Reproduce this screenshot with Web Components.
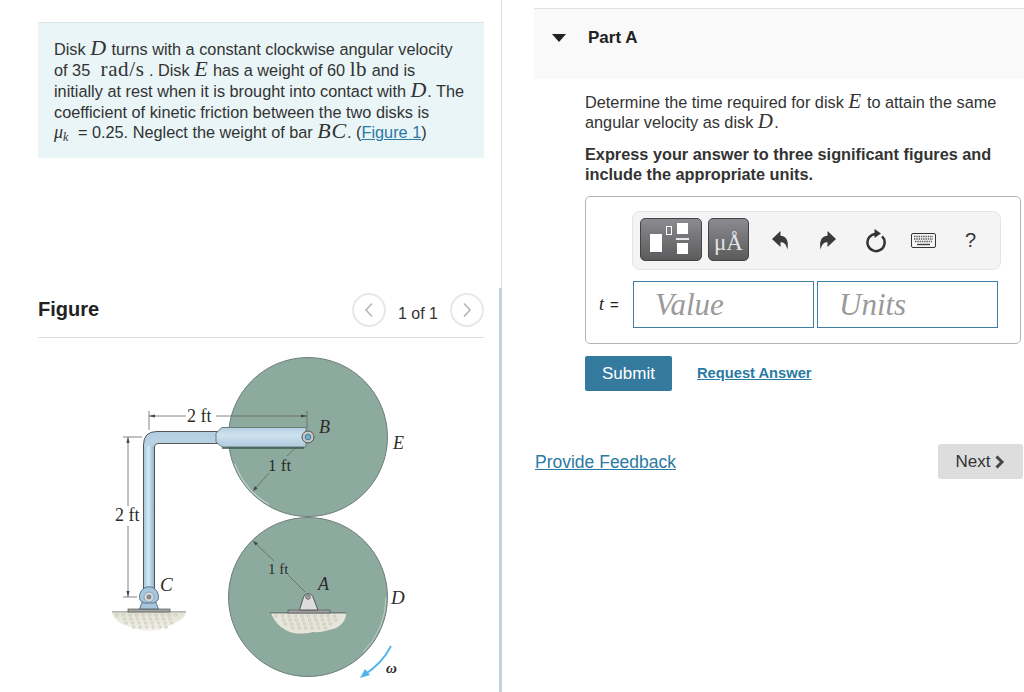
<!DOCTYPE html>
<html lang="en">
<head>
<meta charset="utf-8">
<title>Part A</title>
<style>
  html, body { margin: 0; height: 100%; background: white; }
  body { font-family: "Liberation Sans", Arial, sans-serif; overflow: hidden; }
</style>
</head>
<body>
<quiz-page>
  <div slot="left">
    <problem-statement>
      <t-line>Disk <m-i big>D</m-i> turns with a constant clockwise angular velocity</t-line>
      <t-line>of 35 <m-u>&nbsp;rad/s</m-u> . Disk <m-i big>E</m-i> has a weight of 60 <m-u>lb</m-u> and is</t-line>
      <t-line>initially at rest when it is brought into contact with <m-i big>D</m-i>. The</t-line>
      <t-line>coefficient of kinetic friction between the two disks is</t-line>
      <t-line><m-i>μ</m-i><m-i small>k</m-i> = 0.25. Neglect the weight of bar <m-i big>BC</m-i>. (<a href="#" style="color:#2a7aa3">Figure 1</a>)</t-line>
    </problem-statement>
    <figure-pager></figure-pager>
    <disk-figure></disk-figure>
  </div>
  <div slot="right">
    <part-header>Part A</part-header>
    <part-question>
      <t-line>Determine the time required for disk <m-i mid>E</m-i> to attain the same</t-line>
      <t-line>angular velocity as disk <m-i mid>D</m-i>.</t-line>
      <b slot="ask">Express your answer to three significant figures and<br>include the appropriate units.</b>
    </part-question>
    <answer-box></answer-box>
    <answer-actions></answer-actions>
    <part-footer></part-footer>
  </div>
</quiz-page>

<script>
/**
 * Small helper: a custom element whose shadow root is set from a string.
 * The string is trimmed, white space at its ends would show in inline hosts.
 * @param {string} name Tag name.
 * @param {string} html Shadow root content.
 */
function defineSimple(name, html) {
  customElements.define(name, class extends HTMLElement {
    constructor() {
      super()
      this.attachShadow({ mode: 'open' }).innerHTML = html.trim()
    }
  })
}

// Page frame: the two panes and the scrollbar thumb over the divider.
defineSimple('quiz-page', `
  <style>
    :host { display: flex; height: 692px; position: relative; color: #333; }
    .left { width: 501px; flex: none; border-right: 1px solid #ddd; }
    .right { flex: 1; min-width: 0; }
    .thumb { position: absolute; left: 499px; top: 288px; width: 3px; height: 404px; background: #c5d1e0; }
  </style>
  <div class="left"><slot name="left"></slot></div>
  <div class="right"><slot name="right"></slot></div>
  <div class="thumb"></div>
`)

// One line of running text.
defineSimple('t-line', `
  <style>
    :host { display: block; white-space: nowrap; }
  </style><slot></slot>
`)

// Inline math variable, serif italic.
defineSimple('m-i', `
  <style>
    :host { font-family: "Liberation Serif", "Times New Roman", serif; font-style: italic; font-size: 18px; line-height: 0; }
    :host([big]) { font-size: 22px; letter-spacing: .8px; }
    :host([mid]) { font-size: 21px; letter-spacing: 1.2px; }
    :host([small]) { font-size: 12px; vertical-align: -3px; margin-right: 5px; }
  </style><slot></slot>
`)

// Inline math unit, upright serif.
defineSimple('m-u', `
  <style>
    :host { font-family: "Liberation Serif", "Times New Roman", serif; font-size: 21px; letter-spacing: .6px; line-height: 0; }
  </style><slot></slot>
`)

defineSimple('problem-statement', `
  <style>
    :host {
      display: block; margin: 22px 17px 0 38px; padding: 16.3px 16px 15.7px;
      background: #e9f5f7; border-top: 1px solid #dde5e6;
      font-size: 16.3px; line-height: 20.8px; height: 103px;
    }
  </style>
  <slot></slot>
`)

defineSimple('figure-pager', `
  <style>
    :host {
      display: flex; align-items: center; margin: 136px 17px 0 38px; height: 43px;
      border-bottom: 1px solid #ddd;
    }
    h2 { margin: 0 auto 0 0; font-size: 20px; font-weight: bold; color: #222; position: relative; top: -6px; }
    .round {
      width: 30px; height: 30px; border: 2px solid #e8e8e8; border-radius: 50%;
      display: flex; align-items: center; justify-content: center; position: relative; top: -5px;
    }
    .count { width: 66px; text-align: center; font-size: 16px; position: relative; top: -1px; margin: 0 -1px; }
  </style>
  <h2>Figure</h2>
  <span class="round"><svg width="10" height="16" viewBox="0 0 10 16"><path d="M8 1.5 2 8l6 6.5" fill="none" stroke="#b5b5b5" stroke-width="1.6"/></svg></span>
  <span class="count">1 of 1</span>
  <span class="round"><svg width="10" height="16" viewBox="0 0 10 16"><path d="M2 1.5 8 8l-6 6.5" fill="none" stroke="#b5b5b5" stroke-width="1.6"/></svg></span>
`)

/**
 * Stippled ground under the supports.
 * @param {number} x0 Left edge of the dots.
 * @param {number} x1 Right edge of the dots.
 * @param {number} y0 Top of the dots.
 * @param {string} colour Dot colour.
 * @return {string} SVG circles.
 */
function groundDots(x0, x1, y0, colour) {
  let out = ''
  let i = 0
  for(let y = y0; y < y0 + 14; y += 4) {
    const w = (x1 - x0) * (1 - (y - y0) / 30)
    const mid = (x0 + x1) / 2
    for(let x = mid - w / 2 + 2 + (i % 2) * 3; x < mid + w / 2 - 2; x += 6.5) {
      out += `<circle cx="${x.toFixed(1)}" cy="${y}" r="1.3" fill="none" stroke="${colour}" stroke-width=".9"/>`
    }
    i++
  }
  return out
}

// The figure itself, coordinates are page pixels shifted by the viewBox.
defineSimple('disk-figure', `
  <style>
    :host { display: block; height: 354px; }
    svg { display: block; }
    text { font-family: "Liberation Serif", "Times New Roman", serif; fill: #2c2c2c; }
    .lab { font-style: italic; font-size: 18px; }
    .dim { font-size: 18px; }
  </style>
  <svg width="500" height="354" viewBox="0 338 500 354">
    <defs>
      <linearGradient id="vbar" x1="0" x2="1" y1="0" y2="0">
        <stop offset="0" stop-color="#a5c6dd"/><stop offset=".45" stop-color="#d6e8f3"/><stop offset="1" stop-color="#8fb6d2"/>
      </linearGradient>
      <linearGradient id="hbar" x1="0" x2="0" y1="0" y2="1">
        <stop offset="0" stop-color="#b4cfe2"/><stop offset=".4" stop-color="#cfe2ee"/><stop offset="1" stop-color="#aecbdf"/>
      </linearGradient>
      <linearGradient id="fadeC" x1="0" x2="0" y1="0" y2="1">
        <stop offset="0" stop-color="#e2e1d4"/><stop offset="1" stop-color="#f3f3ec"/>
      </linearGradient>
    </defs>

    <circle cx="308" cy="437" r="79.5" fill="#8daa9f" stroke="#6f7f78" stroke-width="1"/>
    <circle cx="308" cy="597" r="79.5" fill="#8daa9f" stroke="#6f7f78" stroke-width="1"/>
    <path d="M234.700 463.700A78 78 0 0 0 269 504.500" fill="none" stroke="#bdd0c8" stroke-width="1.200"/>
    <path d="M386 597A78 78 0 0 1 363 652" fill="none" stroke="#bdd0c8" stroke-width="1"/>

    <!-- dimensions -->
    <g stroke="#666" stroke-width=".8" fill="none">
      <path d="M149 411V430M307 411V429M149 416H186M216 416H307"/>
      <path d="M123 437H142M128 437V506M128 526V597M123 597H137"/>
      <path d="M303 441 287 456M269 473 253 491"/>
      <path d="M253 541 274 561M288 575 305 592"/>
    </g>
    <g fill="#444">
      <path d="M149 416l6-1.600v3.200zM307 416l-6-1.600v3.200z"/>
      <path d="M128 437l-1.600 6h3.200zM128 597l-1.600-6h3.200z"/>
      <path d="M253 491l2-5 2.400 2.400zM253 541l5 2-2.400 2.400z"/>
    </g>
    <text class="dim" x="187" y="422">2 ft</text>
    <text class="dim" x="115" y="521">2 ft</text>
    <text class="dim" x="268" y="471" style="font-size:17px">1 ft</text>
    <text x="268" y="574" style="font-size:15px">1 ft</text>

    <!-- bar BC -->
    <path d="M143.500 590V445Q143.500 431.500 157 431.500H220V443.500H158Q154.500 443.500 154.500 447V590Z" fill="url(#hbar)" stroke="#555" stroke-width="1"/>
    <rect x="144" y="446" width="10" height="144" fill="url(#vbar)"/>
    <path d="M216 433 222 427.500H306V447H222L216 442Z" fill="url(#hbar)" stroke="#6d7a7a" stroke-width="1"/>
    <path d="M222 448H304" stroke="#3d5a4c" stroke-width="1.500"/>
    <circle cx="308" cy="437" r="6" fill="#c2c8c8" stroke="#555" stroke-width="1"/>
    <circle cx="308" cy="437" r="2.800" fill="#5fb5dc" stroke="#444" stroke-width=".6"/>

    <!-- support C -->
    <path d="M112 612H186" stroke="#666" stroke-width="1"/>
    <path d="M112 612.500H186C184 621 172 624 164 628 154 633 140 631 130 627 120 624 114 620 112 612.500Z" fill="url(#fadeC)"/>
    ${groundDots(115, 183, 615, '#cbcabb')}
    <rect x="128" y="609" width="42" height="3" fill="#a3a6a3" stroke="#555" stroke-width=".7"/>
    <path d="M139.500 609 143 600H155L158.500 609Z" fill="#a5c6dd" stroke="#46586a" stroke-width=".8"/>
    <path d="M140 600A9.500 10 0 1 1 158 600L154 603H144Z" fill="#a5c6dd" stroke="#46586a" stroke-width=".8"/>
    <circle cx="149" cy="597" r="5" fill="#d3d8db" stroke="#6a7a86" stroke-width=".5"/>
    <circle cx="149" cy="597" r="2" fill="#8b8f92" stroke="#555" stroke-width=".5"/>

    <!-- support A -->
    <path d="M270 613H346" stroke="#555" stroke-width="1"/>
    <path d="M271 613.500H346C346 620 342 625 336 628 328 630 322 633 313 632 304 634 296 634 290 632 280 628 275 622 271 613.500Z" fill="#e6e5da"/>
    ${groundDots(274, 343, 616, '#c8c7b7')}
    <rect x="288" y="610" width="42" height="3" fill="#9fa19e" stroke="#555" stroke-width=".7"/>
    <path d="M299.500 610 303.500 597A5 5 0 0 1 313 597L318 610Z" fill="#dcdcdc" stroke="#4c4c4c" stroke-width=".9"/>
    <circle cx="308" cy="597" r="2.400" fill="#9a9d9e" stroke="#555" stroke-width=".6"/>

    <!-- omega arrow -->
    <path d="M391 646C385 658 375 668 364 675" fill="none" stroke="#50b4e8" stroke-width="1.800"/>
    <path d="M360 678 365 669 370 675Z" fill="#50b4e8"/>

    <text class="lab" x="319" y="433">B</text>
    <text class="lab" x="393" y="449">E</text>
    <text class="lab" x="160" y="591" style="font-size:19px">C</text>
    <text class="lab" x="318" y="590">A</text>
    <text class="lab" x="391" y="604" style="font-size:19px">D</text>
    <text class="lab" x="386" y="673" style="font-weight:bold;font-size:15px">ω</text>
  </svg>
`)

defineSimple('part-header', `
  <style>
    :host {
      display: flex; align-items: flex-start; margin: 8px 0 0 32px; height: 70px;
      background: #f9f9f9; border-top: 1px solid #e2e2e2;
      font-weight: bold; font-size: 17px; color: #222;
    }
    svg { margin: 25px 22px 0 18px; flex: none; }
    span { margin-top: 20px; line-height: 18px; }
  </style>
  <svg width="14" height="8" viewBox="0 0 14 8"><path d="M0 0H14L7 8Z" fill="#222"/></svg>
  <span><slot></slot></span>
`)

defineSimple('part-question', `
  <style>
    :host { display: block; margin: 13px 26px 0 83px; font-size: 16.3px; line-height: 20px; }
    .ask { margin-top: 12px; }
  </style>
  <div><slot></slot></div>
  <div class="ask"><slot name="ask"></slot></div>
`)

// Toolbar of the answer box.
defineSimple('math-toolbar', `
  <style>
    :host {
      display: flex; align-items: center; box-sizing: border-box; width: 369px; height: 59px;
      background: #f4f4f4; border: 1px solid #e4e4e4; border-radius: 8px; padding: 0 0 0 7px;
    }
    .tpl {
      display: block; height: 43px; box-sizing: border-box; border: 1px solid #444; border-radius: 5px;
      background: linear-gradient(#8b8b90, #5b5b5d); position: relative; top: -1px;
    }
    .sym {
      width: 41px; margin-left: 6px; color: #e4e4e4; font: 23px/1 "Liberation Serif", serif;
      display: flex; align-items: flex-end; justify-content: center; padding-bottom: 6px;
    }
    svg { flex: none; display: block; }
    .q { font-size: 20px; color: #333; margin-left: 29px; }
  </style>
  <span class="tpl" style="width:62px">
    <svg width="60" height="41" viewBox="0 0 60 41">
      <rect x="9" y="15" width="12" height="18" fill="#fff"/>
      <rect x="25.500" y="7.500" width="5" height="8" fill="none" stroke="#fff"/>
      <rect x="36" y="4" width="11" height="11" fill="#fff"/>
      <rect x="35" y="19" width="13" height="2" fill="#e6e6e6"/>
      <rect x="36" y="24" width="11" height="11" fill="#fff"/>
    </svg>
  </span>
  <span class="tpl sym">μÅ</span>
  <svg style="margin-left:22px" width="18" height="19" viewBox="0 0 18 19"><path d="M1 8 9.500 0V4.800C15 5 18 9.500 16.500 18.500 15 13 13 11.200 9.500 11.200V16Z" fill="#3a3a3a"/></svg>
  <svg style="margin-left:30px" width="18" height="19" viewBox="0 0 18 19"><path d="M17 8 8.500 0V4.800C3 5 0 9.500 1.500 18.500 3 13 5 11.200 8.500 11.200V16Z" fill="#3a3a3a"/></svg>
  <svg style="margin-left:28px" width="23" height="24" viewBox="0 0 23 24"><path d="M17.100 7.400A8.600 8.600 0 1 1 11 4.900" fill="none" stroke="#333" stroke-width="2.500"/><path d="M9.500 0 16 4.500 9.500 9Z" fill="#333"/></svg>
  <svg style="margin-left:23px" width="25" height="15" viewBox="0 0 25 15">
    <rect x=".5" y=".5" width="24" height="14" rx="1.500" fill="#f6f6f6" stroke="#333"/>
    <path d="M3 3.500H22M3 6H22M4 8.500H21" stroke="#555" stroke-width="1.300" stroke-dasharray="1.400 .9"/>
    <path d="M6 11.500H19" stroke="#444" stroke-width="1.400"/>
  </svg>
  <span class="q">?</span>
`)

// Value or units field; the grey word stands for the placeholder.
defineSimple('answer-field', `
  <style>
    :host {
      display: block; box-sizing: border-box; width: 181px; height: 47px;
      border: 1px solid #3f81a5; border-bottom-width: 1.500px; background: #fff;
      font: italic 31px/46px "Liberation Serif", "Times New Roman", serif; color: #9a9a9a;
      padding-left: 21px;
    }
  </style>
  <slot></slot>
`)

defineSimple('answer-box', `
  <style>
    :host {
      display: block; box-sizing: border-box; width: 436px; height: 148px; margin: 12px 0 0 83px;
      border: 1px solid #b5b5b5; border-radius: 5px; padding: 14px 0 0 46px; position: relative;
    }
    .row { display: flex; align-items: center; margin: 11px 0 0 1px; gap: 3px; }
    .label {
      position: absolute; left: 13px; top: 97px; font-size: 15px; color: #222; white-space: nowrap;
      display: flex; align-items: baseline; gap: 6px;
    }
    .label i { font: italic 18px "Liberation Serif", serif; }
  </style>
  <math-toolbar></math-toolbar>
  <span class="label"><i>t</i><span>=</span></span>
  <div class="row">
    <answer-field>Value</answer-field>
    <answer-field>Units</answer-field>
  </div>
`)

defineSimple('answer-actions', `
  <style>
    :host { display: flex; align-items: center; margin: 12px 0 0 83px; }
    button {
      width: 87px; height: 35px; border: none; border-radius: 2px; background: #337a9e; color: #fff;
      font: 17px "Liberation Sans", Arial, sans-serif; padding: 0;
    }
    a { margin-left: 25px; font-size: 14.7px; font-weight: bold; color: #2a7aa3; position: relative; top: -1px; }
  </style>
  <button>Submit</button>
  <a href="#">Request Answer</a>
`)

defineSimple('part-footer', `
  <style>
    :host { display: flex; align-items: center; justify-content: space-between; margin: 53px 1px 0 33px; }
    a { font-size: 17.5px; color: #2a7aa3; position: relative; top: 1px; }
    .next {
      display: flex; align-items: center; justify-content: center; gap: 4px; width: 85px; height: 35px;
      background: #ddd; border-radius: 3px; font-size: 17px; color: #333;
    }
  </style>
  <a href="#">Provide Feedback</a>
  <span class="next">Next <svg width="11" height="14" viewBox="0 0 11 14"><path d="M2.500 1.500 8 7l-5.500 5.500" fill="none" stroke="#444" stroke-width="3"/></svg></span>
`)
</script>
</body>
</html>
